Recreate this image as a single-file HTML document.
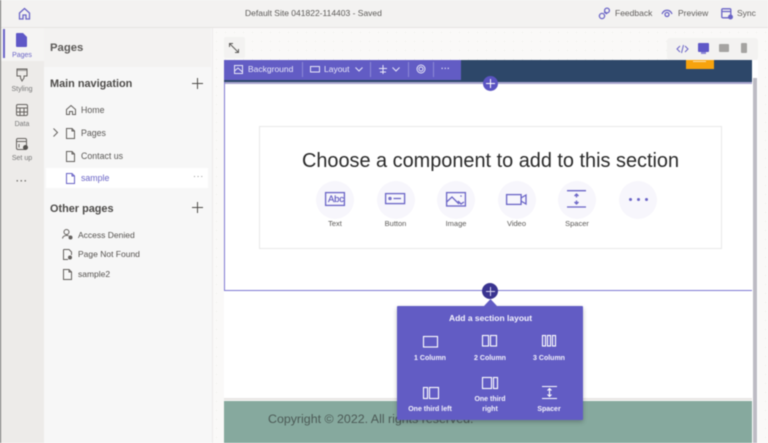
<!DOCTYPE html>
<html><head><meta charset="utf-8"><style>
html,body{margin:0;padding:0}
body{width:768px;height:443px;overflow:hidden;background:#faf9f8;position:relative;font-family:"Liberation Sans",sans-serif;color:#4a4846}
#r{position:absolute;left:0;top:0;width:768px;height:443px;overflow:hidden;filter:blur(.5px)}
.a{position:absolute}
.t{position:absolute;white-space:nowrap;line-height:1}
.c{transform:translateX(-50%);text-align:center}
svg{position:absolute;overflow:visible;fill:none}
.p{stroke:#6a64c6;stroke-width:1.3}
.g{stroke:#65625f;stroke-width:1}
.w{stroke:#fff;stroke-width:1.1}
.n{font-size:8.8px;color:#5a5856}
.l{font-size:8.5px;color:#55524f}
.m{font-size:7px;color:#f4f3fc;font-weight:bold}
.i{font-size:7px;color:#777}
.circ{position:absolute;width:38px;height:38px;border-radius:50%;background:#f7f6fc;top:181px}
.sep{position:absolute;top:62px;width:1px;height:15px;background:#8d88d6}
</style></head><body><div id="r">
<div class="a" style="left:212px;top:28px;width:556px;height:415px;background-color:#faf9f8;background-image:radial-gradient(#efedeb .6px,transparent .8px);background-size:9px 9px"></div>
<div class="a" style="left:0;top:0;width:1px;height:443px;background:#6b6b6b"></div>
<div class="a" style="left:1px;top:0;width:767px;height:27px;background:#f3f2f1;border-bottom:1px solid #e6e4e2"></div>
<div class="a" style="left:1px;top:28px;width:43px;height:415px;background:#edebe9"></div>
<div class="a" style="left:1px;top:28px;width:43px;height:33px;background:#f5f4f3"></div>
<div class="a" style="left:3px;top:29px;width:1.5px;height:29px;background:#6a64c6"></div>
<div class="a" style="left:44px;top:28px;width:168px;height:415px;background:#f7f7f7;border-right:1px solid #eceaea"></div>
<div class="a" style="left:44px;top:28px;width:167px;height:39px;background:#f3f2f1"></div>
<div class="a" style="left:46px;top:168px;width:162px;height:20px;background:#fff"></div>

<svg style="left:18px;top:7px" width="13" height="13" viewBox="0 0 13 13"><path class="p" d="M1.500 6 6.500 1.500 11.500 6V12H8V8H5V12H1.500Z"/></svg>
<div class="t" style="left:245px;top:9px;font-size:8.500px;color:#5c5a58">Default Site 041822-114403 - Saved</div>
<svg style="left:598px;top:7px" width="13" height="13" viewBox="0 0 13 13"><circle class="p" cx="4" cy="9" r="2.600"/><circle class="p" cx="9" cy="3.500" r="2.400"/><path class="p" d="M6 5 9 7"/></svg>
<div class="t" style="left:615px;top:9px;font-size:8.500px;color:#5f5d5b">Feedback</div>
<svg style="left:661px;top:8px" width="12" height="10" viewBox="0 0 12 10"><path class="p" d="M1 6C3 1 9 1 11 6"/><circle class="p" cx="6" cy="6.500" r="2"/></svg>
<div class="t" style="left:678px;top:9px;font-size:8.500px;color:#5f5d5b">Preview</div>
<svg style="left:721px;top:8px" width="13" height="12" viewBox="0 0 13 12"><rect class="p" x=".8" y=".8" width="9" height="9" rx="1"/><path class="p" d="M1 3.500H10"/><circle cx="9.500" cy="9" r="2.500" fill="#6a64c6"/></svg>
<div class="t" style="left:737px;top:9px;font-size:8.500px;color:#5f5d5b">Sync</div>

<svg style="left:16px;top:33px" width="11" height="14" viewBox="0 0 11 14"><path fill="#5f58c7" d="M0 1Q0 0 1 0H7L11 4V13Q11 14 10 14H1Q0 14 0 13Z"/></svg>
<div class="t c i" style="left:22px;top:52px;color:#6a64c6">Pages</div>
<svg style="left:16px;top:68px" width="12" height="14" viewBox="0 0 12 14"><path class="g" d="M1 1H11V8H8V10L6 13 4.500 10V8H1Z"/><path fill="#65625f" d="M1 1H11V3H1Z" opacity=".5"/></svg>
<div class="t c i" style="left:22px;top:86px">Styling</div>
<svg style="left:16px;top:104px" width="12" height="12" viewBox="0 0 12 12"><rect class="g" x=".5" y=".5" width="11" height="11" rx="1.500"/><path class="g" d="M.5 4H11.500M.5 8H11.500M4 4V11.500M8 4V11.500"/></svg>
<div class="t c i" style="left:22px;top:121px">Data</div>
<svg style="left:16px;top:138px" width="13" height="13" viewBox="0 0 13 13"><rect class="g" x=".5" y=".5" width="10" height="11" rx="1.500"/><path class="g" d="M.5 3.500H10.500M3 6V9.500"/><circle cx="9.500" cy="9.500" r="2.500" fill="#55524f"/></svg>
<div class="t c i" style="left:22px;top:155px">Set up</div>
<div class="t c" style="left:22px;top:177px;font-size:9px;color:#65625f;letter-spacing:1px;font-weight:bold">···</div>

<div class="t" style="left:50px;top:43px;font-size:11.300px;font-weight:bold;color:#5c5a58">Pages</div>
<div class="t" style="left:50px;top:79px;font-size:10.900px;font-weight:bold;color:#4d4b49">Main navigation</div>
<svg style="left:192px;top:78px" width="11" height="11"><path stroke="#4d4b49" d="M5.500 0V11M0 5.500H11"/></svg>
<svg style="left:66px;top:105px" width="10" height="10" viewBox="0 0 10 10"><path class="g" d="M.5 4.500 5 .5 9.500 4.500V9.500H6.500V6.500H3.500V9.500H.5Z"/></svg>
<div class="t n" style="left:81px;top:106px">Home</div>
<svg style="left:53px;top:128px" width="5" height="9"><path class="g" d="M.5.5 4.500 4.500.5 8.500"/></svg>
<svg style="left:66px;top:128px" width="9" height="11" viewBox="0 0 9 11"><path class="g" d="M.5.5H6L8.500 3V10.500H.5ZM6 .5V3H8.500"/></svg>
<div class="t n" style="left:81px;top:129px">Pages</div>
<svg style="left:66px;top:151px" width="9" height="11" viewBox="0 0 9 11"><path class="g" d="M.5.5H6L8.500 3V10.500H.5ZM6 .5V3H8.500"/></svg>
<div class="t n" style="left:81px;top:152px">Contact us</div>
<svg style="left:66px;top:173px" width="9" height="11" viewBox="0 0 9 11"><path class="p" style="stroke-width:1" d="M.5.5H6L8.500 3V10.500H.5ZM6 .5V3H8.500"/></svg>
<div class="t n" style="left:81px;top:174px;color:#6a64c6">sample</div>
<div class="t" style="left:193px;top:172px;font-size:9px;color:#888;letter-spacing:.6px">···</div>

<div class="t" style="left:50px;top:204px;font-size:10.900px;font-weight:bold;color:#4d4b49">Other pages</div>
<svg style="left:192px;top:202px" width="11" height="11"><path stroke="#4d4b49" d="M5.500 0V11M0 5.500H11"/></svg>
<svg style="left:62px;top:229px" width="11" height="11" viewBox="0 0 11 11"><circle class="g" cx="4.500" cy="3" r="2.500"/><path class="g" d="M.5 9.500C1 6 6 6 6.500 7"/><circle cx="8.500" cy="8.500" r="2" fill="#65625f"/></svg>
<div class="t l" style="left:78px;top:231px">Access Denied</div>
<svg style="left:63px;top:249px" width="9" height="11" viewBox="0 0 9 11"><path class="g" d="M.5.5H6L8.500 3V6M5 10.500H.5V.5"/><circle cx="7" cy="8.500" r="2" fill="#65625f"/></svg>
<div class="t l" style="left:78px;top:250px">Page Not Found</div>
<svg style="left:63px;top:269px" width="9" height="11" viewBox="0 0 9 11"><path class="g" d="M.5.5H6L8.500 3V10.500H.5ZM6 .5V3H8.500"/></svg>
<div class="t l" style="left:78px;top:270px">sample2</div>

<!-- canvas -->
<div class="a" style="left:224px;top:37px;width:21px;height:21px;background:#f3f2f1;border-radius:2px"></div>
<svg style="left:229px;top:43px" width="10" height="10"><path stroke="#5f5d5b" d="M.5.5 9.500 9.500M.5 4V.5H4M6 9.500H9.500V6"/></svg>
<div class="a" style="left:667px;top:38px;width:91px;height:22px;background:#f3f2f1;border-radius:3px"></div>
<div class="a" style="left:752px;top:60px;width:6px;height:383px;background:#fff"></div>
<div class="a" style="left:753px;top:78px;width:4px;height:365px;background:#bdbbc4"></div>
<div class="a" style="left:224px;top:60px;width:528px;height:22px;background:#2d4769"></div>
<div class="a" style="left:686px;top:60px;width:28px;height:9px;background:#f7a30d"></div>
<div class="a" style="left:693px;top:61px;width:13px;height:1px;background:#fde3ae"></div>
<div class="a" style="left:224px;top:82px;width:528px;height:318px;background:#fff"></div>
<div class="a" style="left:224px;top:82px;width:528px;height:2px;background:#a9a6cf"></div>
<div class="a" style="left:224px;top:82px;width:528px;height:209px;border-left:1px solid #7f79d2;border-bottom:1px solid #7f79d2;box-sizing:border-box"></div>

<div class="a" style="left:224px;top:60px;width:237px;height:20px;background:#625cc4"></div>
<svg style="left:234px;top:64px" width="10" height="11" viewBox="0 0 10 11"><rect stroke="#e8e7f8" x=".5" y="1.500" width="8" height="8"/><path stroke="#e8e7f8" d="M.5 7 4 4 8.500 8"/></svg>
<div class="t" style="left:248px;top:65px;font-size:8.500px;color:#e8e7f8">Background</div>
<div class="sep" style="left:302px"></div>
<svg style="left:310px;top:66px" width="10" height="7"><rect stroke="#e8e7f8" x=".5" y=".5" width="9" height="5.500"/></svg>
<div class="t" style="left:324px;top:65px;font-size:8.500px;color:#e8e7f8">Layout</div>
<svg style="left:355px;top:67px" width="8" height="5"><path stroke="#e8e7f8" d="M.5.5 4 4 7.500.5"/></svg>
<div class="sep" style="left:370px"></div>
<svg style="left:379px;top:65px" width="8" height="9"><path stroke="#e8e7f8" d="M4 0V9M0 3.500H8M1 7H7"/></svg>
<svg style="left:392px;top:67px" width="8" height="5"><path stroke="#e8e7f8" d="M.5.5 4 4 7.500.5"/></svg>
<div class="sep" style="left:408px"></div>
<svg style="left:416px;top:64px" width="10" height="10"><circle stroke="#e8e7f8" cx="5" cy="5" r="4"/><circle stroke="#e8e7f8" cx="5" cy="5" r="2"/></svg>
<div class="sep" style="left:433px"></div>
<div class="t" style="left:441px;top:65px;font-size:8px;color:#e8e7f8;letter-spacing:.4px;font-weight:bold">···</div>

<div class="a" style="left:483px;top:76px;width:15px;height:15px;border-radius:50%;background:#5b54c2"></div>
<svg style="left:486px;top:79px" width="9" height="9"><path stroke="#fff" d="M4.500 0V9M0 4.500H9"/></svg>

<svg style="left:677px;top:44px" width="10" height="10"><path stroke="#6a64c6" d="M3 2 0 5 3 8M8 2 11 5 8 8M6.500 1 4.500 9"/></svg>
<div class="a" style="left:698px;top:43px;width:11px;height:9px;background:#5f58c7;border-radius:1px"></div>
<div class="a" style="left:701px;top:52px;width:5px;height:2px;background:#8d88d6"></div>
<div class="a" style="left:719px;top:44px;width:10px;height:8px;background:#a5a3a1;border-radius:1px"></div>
<div class="a" style="left:741px;top:43px;width:6px;height:10px;background:#a5a3a1;border-radius:1px"></div>

<!-- component box -->
<div class="a" style="left:259px;top:126px;width:463px;height:123px;box-sizing:border-box;border:1px solid #e8e8e8"></div>
<div class="t" style="left:490.500px;top:152px;transform:translateX(-50%);font-size:19.900px;color:#2a2a2a">Choose a component to add to this section</div>
<div class="circ" style="left:316px"></div><div class="circ" style="left:377px"></div><div class="circ" style="left:437px"></div><div class="circ" style="left:498px"></div><div class="circ" style="left:558px"></div><div class="circ" style="left:619px"></div>

<svg style="left:325px;top:192px" width="20" height="14"><rect class="p" x=".6" y=".6" width="18.800" height="12.800"/></svg>
<div class="t" style="left:328px;top:195px;font-size:9.500px;color:#6a64c6;letter-spacing:-.2px;-webkit-text-stroke:.25px #6a64c6">Abc</div>
<svg style="left:385px;top:193px" width="21" height="12"><rect class="p" x=".6" y=".6" width="19" height="10"/><circle class="p" cx="5" cy="5.500" r="1"/><path class="p" d="M8.500 5.500H16"/></svg>
<svg style="left:446px;top:192px" width="20" height="15"><rect class="p" x=".6" y=".6" width="18.800" height="13.400"/><path class="p" d="M.6 10 6 5 13 12M12 9l3 3 3-2"/><circle fill="#6a64c6" cx="15" cy="4" r=".8"/></svg>
<svg style="left:506px;top:194px" width="21" height="11"><rect class="p" x=".6" y=".6" width="14.500" height="9.800"/><path class="p" d="M15 4 20 1V10L15 7"/></svg>
<svg style="left:566px;top:190px" width="21" height="18"><path class="p" d="M1 .7H20M1 17H20M10.500 4V7.500M8.500 6 10.500 4 12.500 6M10.500 10.500V14M8.500 12 10.500 14 12.500 12"/></svg>
<div class="a" style="left:629px;top:198px;width:3px;height:3px;border-radius:50%;background:#6a64c6"></div><div class="a" style="left:637px;top:198px;width:3px;height:3px;border-radius:50%;background:#6a64c6"></div><div class="a" style="left:645px;top:198px;width:3px;height:3px;border-radius:50%;background:#6a64c6"></div>

<div class="t c" style="left:335px;top:219.500px;font-size:7.500px;color:#5a5856">Text</div>
<div class="t c" style="left:395.500px;top:219.500px;font-size:7.500px;color:#5a5856">Button</div>
<div class="t c" style="left:456px;top:219.500px;font-size:7.500px;color:#5a5856">Image</div>
<div class="t c" style="left:516.500px;top:219.500px;font-size:7.500px;color:#5a5856">Video</div>
<div class="t c" style="left:577px;top:219.500px;font-size:7.500px;color:#5a5856">Spacer</div>

<!-- footer -->
<div class="a" style="left:224px;top:398px;width:528px;height:2px;background:#e8e6e4"></div>
<div class="a" style="left:224px;top:401px;width:528px;height:42px;background:#86a99e"></div>
<div class="t" style="left:268px;top:413px;font-size:12.400px;color:#4c5a56">Copyright © 2022. All rights reserved.</div>

<!-- popup -->
<div class="a" style="left:397px;top:306px;width:186px;height:114px;background:#625cc4;border-radius:1px;box-shadow:0 2px 5px rgba(0,0,0,.25)"></div>
<div class="a" style="left:482px;top:283px;width:16px;height:16px;border-radius:50%;background:#3a3490"></div>
<svg style="left:485.500px;top:287px" width="9" height="9"><path stroke="#d8d6f2" d="M4.500 0V9M0 4.500H9"/></svg>
<svg style="left:484px;top:299px" width="13" height="7"><path fill="#625cc4" d="M6.500 0 13 7H0Z"/></svg>
<div class="t c" style="left:490.500px;top:314px;font-size:8.500px;font-weight:bold;color:#f4f3fc">Add a section layout</div>

<svg style="left:423px;top:336px" width="15" height="12"><rect class="w" x=".5" y=".5" width="14" height="10.500"/></svg>
<svg style="left:482px;top:335px" width="15" height="12"><rect class="w" x=".5" y=".5" width="6" height="10.500"/><rect class="w" x="8.500" y=".5" width="6" height="10.500"/></svg>
<svg style="left:542px;top:335px" width="15" height="12"><rect class="w" x=".5" y=".5" width="3" height="10.500"/><rect class="w" x="5.500" y=".5" width="3" height="10.500"/><rect class="w" x="10.500" y=".5" width="3" height="10.500"/></svg>
<div class="t c m" style="left:430px;top:354.500px">1 Column</div>
<div class="t c m" style="left:490px;top:354.500px">2 Column</div>
<div class="t c m" style="left:549px;top:354.500px">3 Column</div>
<svg style="left:423px;top:387px" width="16" height="12"><rect class="w" x=".5" y=".5" width="4" height="11"/><rect class="w" x="6.500" y=".5" width="9" height="11"/></svg>
<svg style="left:482px;top:377px" width="16" height="12"><rect class="w" x=".5" y=".5" width="9" height="11"/><rect class="w" x="11.500" y=".5" width="4" height="11"/></svg>
<svg style="left:542px;top:386px" width="15" height="13"><path class="w" d="M0 .5H15M0 12.500H15M7.500 3V10M5.500 4.500 7.500 2.500 9.500 4.500M5.500 8.500 7.500 10.500 9.500 8.500"/></svg>
<div class="t c m" style="left:430px;top:406px">One third left</div>
<div class="t c m" style="left:490px;top:396px">One third</div>
<div class="t c m" style="left:490px;top:406px">right</div>
<div class="t c m" style="left:549px;top:406px">Spacer</div>
</div></body></html>
